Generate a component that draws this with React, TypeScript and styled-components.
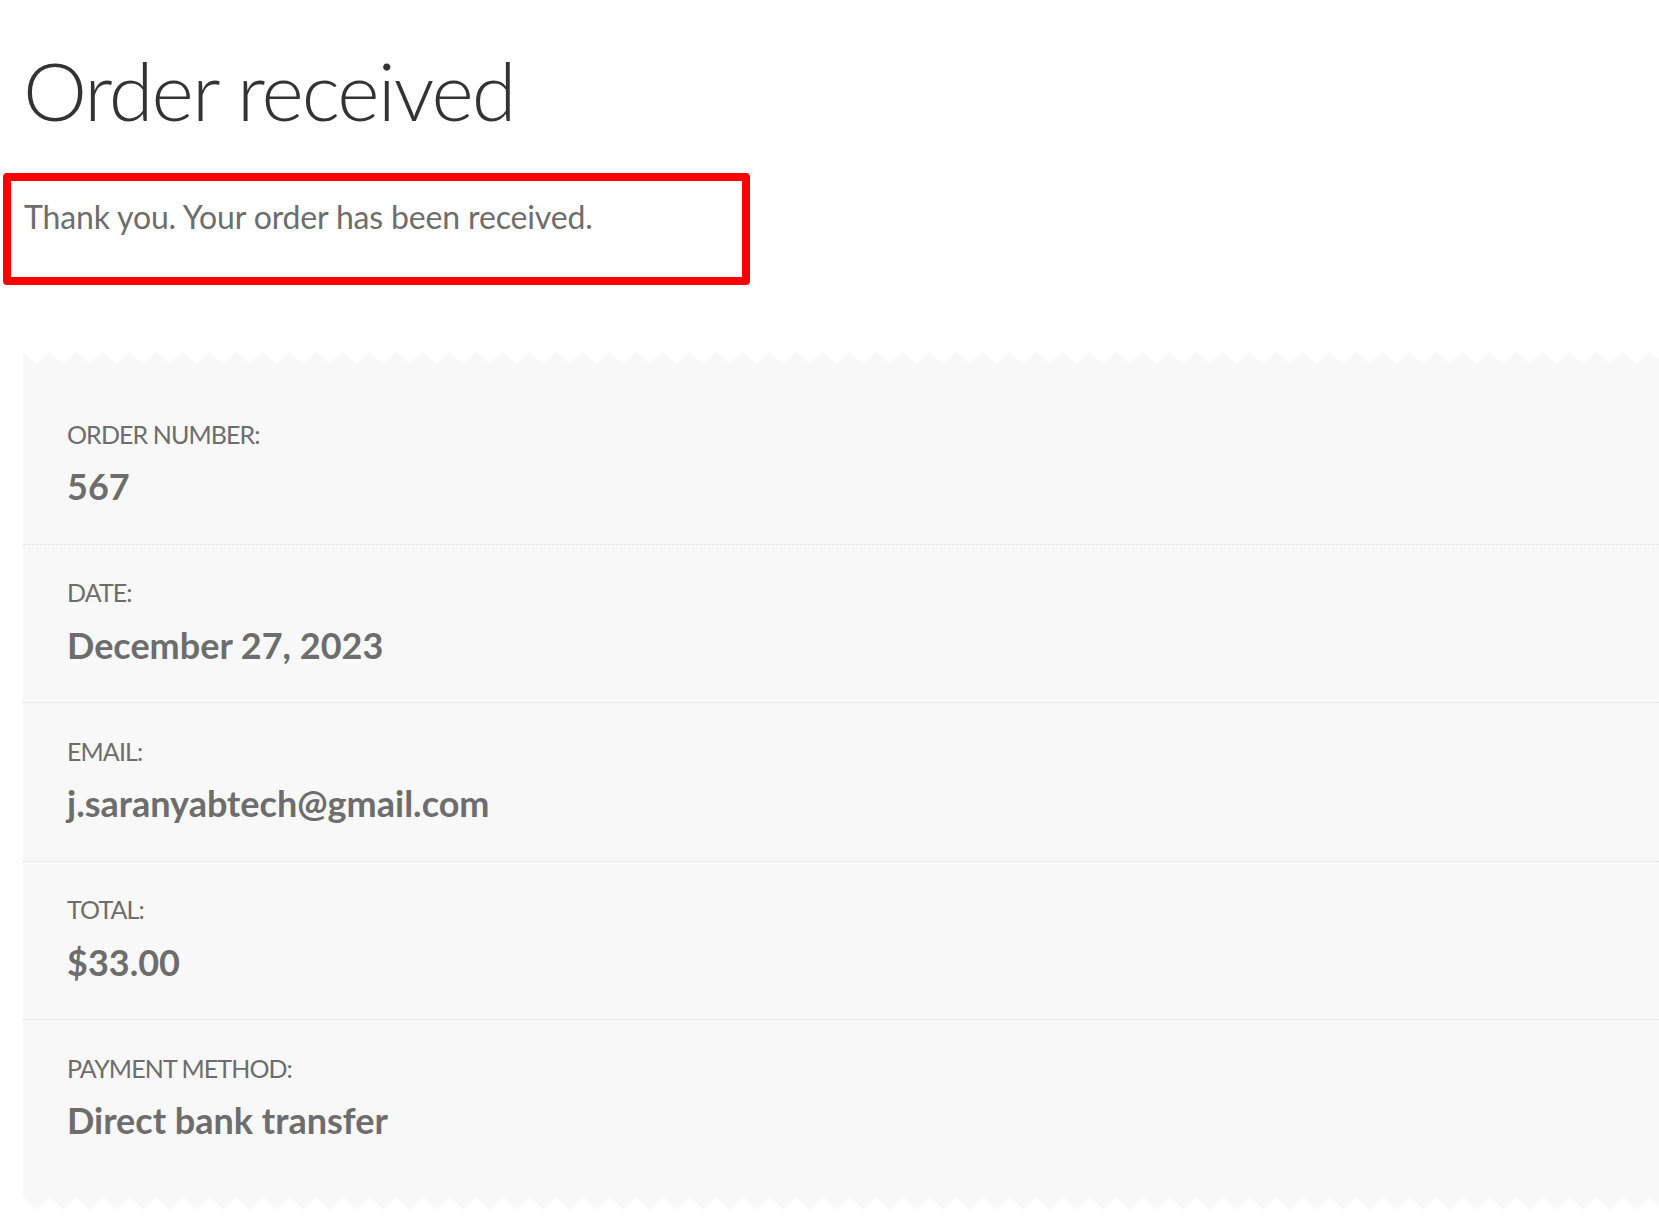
import React from "react";
import styled, { createGlobalStyle } from "styled-components";

const GlobalStyle = createGlobalStyle`
  html, body {
    margin: 0;
    padding: 0;
    background: #ffffff;
    overflow: hidden;
  }
  body {
    font-family: "Lato", "Liberation Sans", sans-serif;
    color: #6d6d6d;
  }
  * { box-sizing: border-box; }
`;

const Page = styled.main`
  padding: 42px 0 0 23px;
  width: 100%;
`;

const Title = styled.h1`
  margin: 0;
  font-family: "Lato", "Liberation Sans", sans-serif;
  font-weight: 300;
  font-size: 81px;
  line-height: 96px;
  color: #333333;
  letter-spacing: -1.9px;
`;

const Notice = styled.div`
  margin: 35px 0 0 -20px;
  width: 747px;
  border: 8px solid #ff0000;
  border-radius: 4px;
  padding: 12px 13px 36px;
`;

const NoticeText = styled.p`
  margin: 0;
  font-size: 32px;
  line-height: 48px;
  font-weight: 400;
  letter-spacing: -0.15px;
  color: #6d6d6d;
`;

const Receipt = styled.section`
  margin-top: 67px;
  display: flex;
  flex-direction: column;
`;

const EdgeSvg = styled.svg`
  display: block;
  width: 100%;
`;

const Details = styled.ul`
  list-style: none;
  margin: 0;
  padding: 22px 0 20px 0;
  background: #f8f8f8;
`;

const Row = styled.li<{ $last?: boolean }>`
  padding: 29.5px 0 ${(p) => (p.$last ? "31.5px" : "32.5px")} 44px;
  border-bottom: ${(p) => (p.$last ? "none" : "1px dotted #dedede")};
`;

const Label = styled.div`
  font-size: 25px;
  line-height: 36px;
  letter-spacing: -0.9px;
  text-transform: uppercase;
  color: #6d6d6d;
`;

const Value = styled.strong`
  display: block;
  margin-top: 9.5px;
  font-size: 36px;
  line-height: 50px;
  font-weight: 700;
  color: #6d6d6d;
`;

const W = 26.667;

function ZigTop() {
  return (
    <EdgeSvg height="12" aria-hidden="true">
      <defs>
        <pattern id="zigTop" patternUnits="userSpaceOnUse" width={W} height="12">
          <polygon
            points={`0,0 ${W / 2},12 ${W},0 ${W},12 0,12`}
            fill="#f8f8f8"
          />
        </pattern>
      </defs>
      <rect x="0" y="0" width="100%" height="12" fill="url(#zigTop)" />
    </EdgeSvg>
  );
}

function ZigBottom() {
  return (
    <EdgeSvg height="13" aria-hidden="true">
      <defs>
        <pattern id="zigBottom" patternUnits="userSpaceOnUse" width={W} height="13">
          <polygon points={`0,0 ${W},0 ${W / 2},13`} fill="#f8f8f8" />
        </pattern>
      </defs>
      <rect x="0" y="0" width="100%" height="13" fill="url(#zigBottom)" />
    </EdgeSvg>
  );
}

const rows = [
  { label: "Order number:", value: "567" },
  { label: "Date:", value: "December 27, 2023" },
  { label: "Email:", value: "j.saranyabtech@gmail.com" },
  { label: "Total:", value: "$33.00" },
  { label: "Payment method:", value: "Direct bank transfer" },
];

export default function App() {
  return (
    <>
      <GlobalStyle />
      <Page>
        <Title>Order received</Title>
        <Notice>
          <NoticeText>Thank you. Your order has been received.</NoticeText>
        </Notice>
        <Receipt>
          <ZigTop />
          <Details>
            {rows.map((r, i) => (
              <Row key={r.label} $last={i === rows.length - 1}>
                <Label>{r.label}</Label>
                <Value>{r.value}</Value>
              </Row>
            ))}
          </Details>
          <ZigBottom />
        </Receipt>
      </Page>
    </>
  );
}
